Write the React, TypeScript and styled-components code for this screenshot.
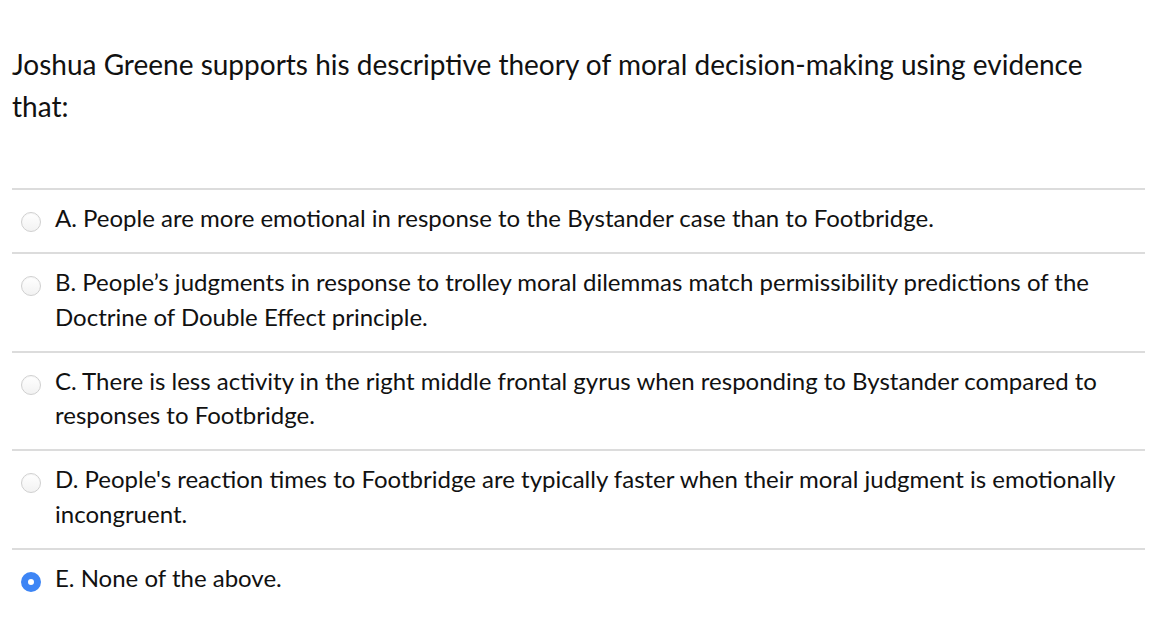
import React from 'react';
import styled, {createGlobalStyle} from "styled-components";

const GlobalStyle = createGlobalStyle`
body {
margin: 0;
background: #fff;
font-family: Lato, "Noto Sans", sans-serif;
color: #111;
}`;

const Page = styled.div`
padding: 43px 7px 0 12px;`;

const Question = styled.p`
margin: 0 0 61px;
max-width: 1100px;
font-size: 28px;
line-height: 42px;
color: #111;`;

const List = styled.div`
display: flex;
flex-direction: column;`;

const Row = styled.label`
display: flex;
align-items: flex-start;
gap: 14px;
padding: 11px 0 16.5px 9px;
border-top: 2px solid #dcdcdc;
cursor: pointer;`;

type RadioProps = {
    checked?: boolean;
}

const Radio = styled.span<RadioProps>`
flex: none;
box-sizing: border-box;
width: 20px;
height: 20px;
margin-top: 11px;
border-radius: 50%;
border: ${(props) => props.checked ? '7px solid #3d85f5' : '1px solid #d0d0d0'};
background: ${(props) => props.checked ? '#fff' : 'linear-gradient(#fff, #f2f2f2)'};
box-shadow: ${(props) => props.checked ? 'none' : 'inset 0 1px 1px rgba(0,0,0,0.04)'};`;

const Text = styled.span`
font-size: 24px;
line-height: 34.5px;
color: #111;`;

const options = [
    "A. People are more emotional in response to the Bystander case than to Footbridge.",
    "B. People\u2019s judgments in response to trolley moral dilemmas match permissibility predictions of the Doctrine of Double Effect principle.",
    "C. There is less activity in the right middle frontal gyrus when responding to Bystander compared to responses to Footbridge.",
    "D. People's reaction times to Footbridge are typically faster when their moral judgment is emotionally incongruent.",
    "E. None of the above.",
];

const App = () => {
    return (
        <>
            <GlobalStyle/>
            <Page>
                <Question>
                    Joshua Greene supports his descriptive theory of moral decision-making using evidence that:
                </Question>
                <List>
                    {options.map((o, i) => (
                        <Row key={i}>
                            <Radio checked={i === 4}/>
                            <Text>{o}</Text>
                        </Row>
                    ))}
                </List>
            </Page>
        </>
    );
};

export default App;
